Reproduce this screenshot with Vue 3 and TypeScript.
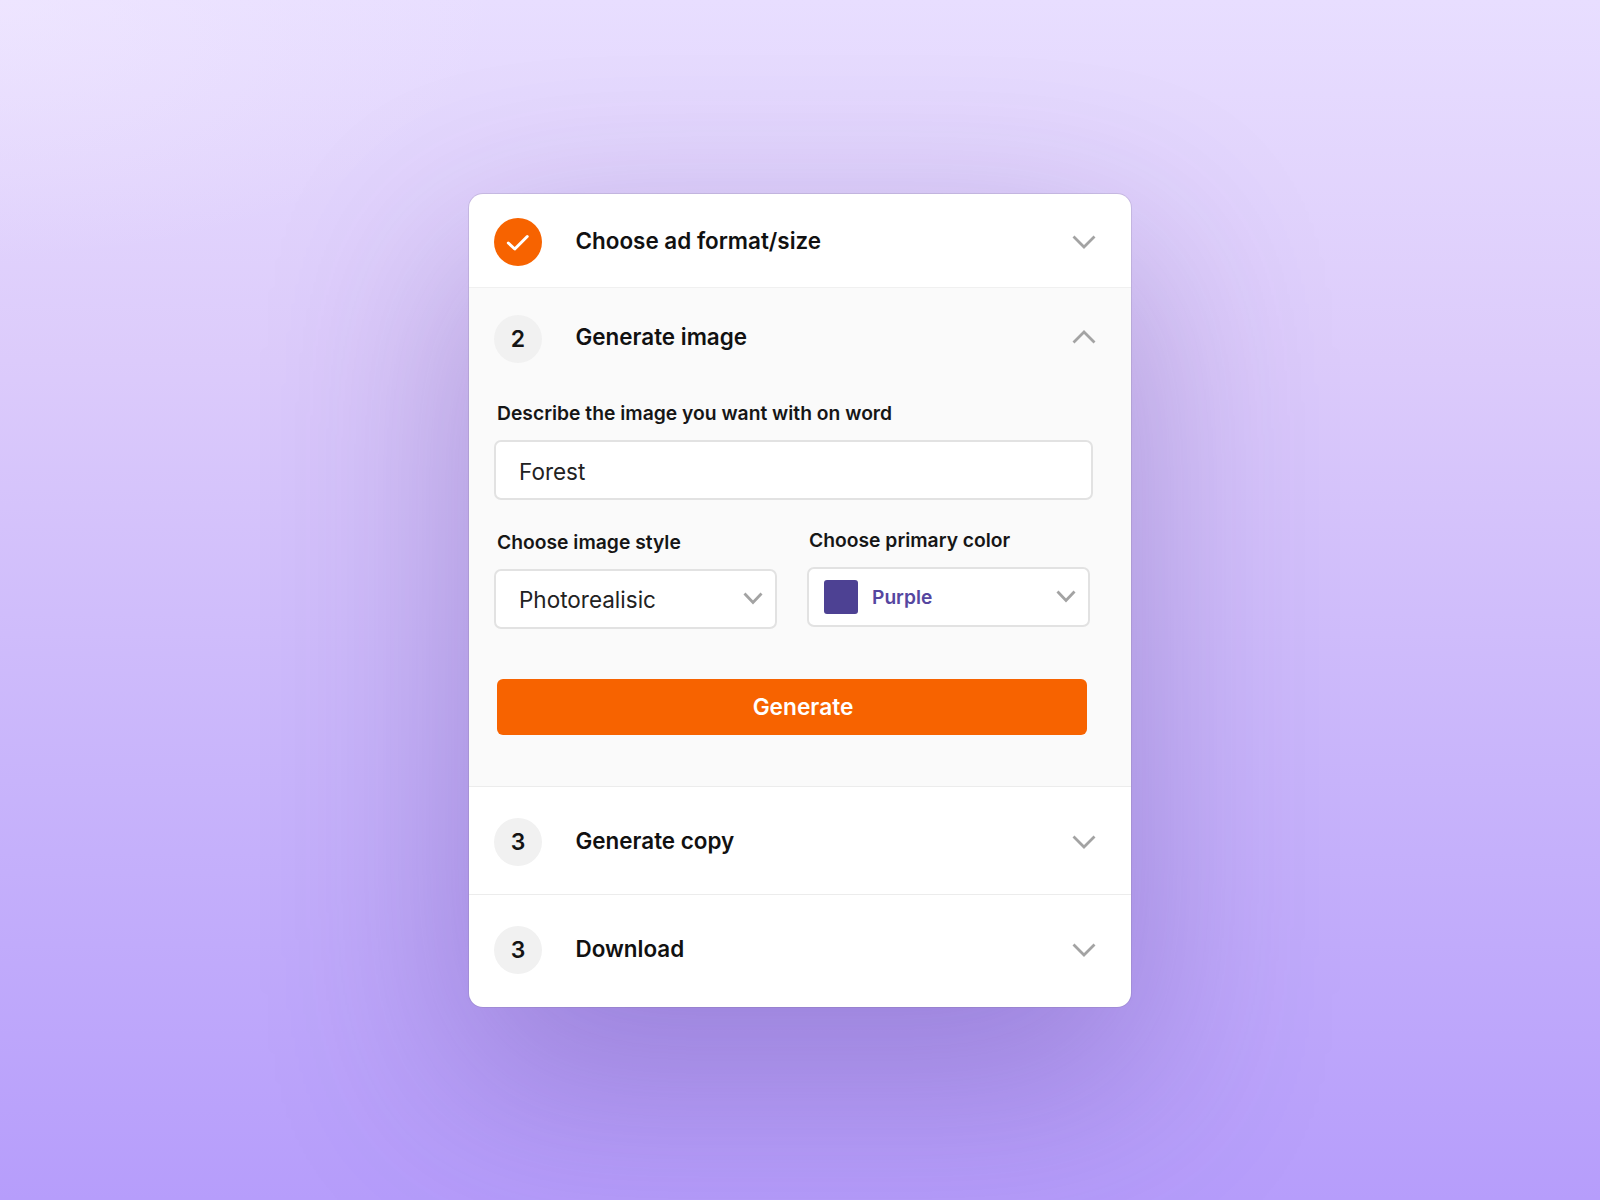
<script setup lang="ts">
interface Step { mark: string; title: string; done?: boolean }
const first: Step = { mark: '', title: 'Choose ad format/size', done: true }
const later: Step[] = [
  { mark: '3', title: 'Generate copy' },
  { mark: '3', title: 'Download' },
]
</script>

<template>
  <div class="page">
    <main class="card">
      <header class="row row-first">
        <span class="badge badge-done">
          <svg width="24" height="19" viewBox="0 0 26 20" fill="none">
            <path d="M2.5 10.5 L9.5 17 L23 3.5" stroke="#fff" stroke-width="3.2" stroke-linecap="round" stroke-linejoin="round" />
          </svg>
        </span>
        <h2 class="title">{{ first.title }}</h2>
        <svg class="chev" width="24" height="14" viewBox="0 0 24 14" fill="none">
          <path d="M1.5 1.5 L12 12 L22.5 1.5" stroke="#a3a3a3" stroke-width="2.8" />
        </svg>
      </header>

      <section class="open">
        <div class="row row-open">
          <span class="badge">2</span>
          <h2 class="title title-open">Generate image</h2>
          <svg class="chev chev-open" width="24" height="14" viewBox="0 0 24 14" fill="none">
            <path d="M1.5 12.5 L12 2 L22.5 12.5" stroke="#a3a3a3" stroke-width="2.8" />
          </svg>
        </div>

        <label class="label label-top">Describe the image you want with on word</label>
        <div class="field field-wide">Forest</div>

        <div class="cols">
          <div class="col col-left">
            <label class="label">Choose image style</label>
            <div class="field field-select">
              <span class="value">Photorealisic</span>
              <svg width="20" height="13" viewBox="0 0 20 13" fill="none">
                <path d="M1.5 1.5 L10 10.5 L18.5 1.5" stroke="#a3a3a3" stroke-width="2.8" />
              </svg>
            </div>
          </div>
          <div class="col col-right">
            <label class="label">Choose primary color</label>
            <div class="field field-select field-color">
              <span class="swatch"></span>
              <span class="color-name">Purple</span>
              <svg width="20" height="13" viewBox="0 0 20 13" fill="none">
                <path d="M1.5 1.5 L10 10.5 L18.5 1.5" stroke="#a3a3a3" stroke-width="2.8" />
              </svg>
            </div>
          </div>
        </div>

        <button class="generate" type="button">Generate</button>
      </section>

      <div v-for="(s, i) in later" :key="s.title" class="row row-later" :class="{ 'row-last': i === later.length - 1 }">
        <span class="badge">{{ s.mark }}</span>
        <h2 class="title">{{ s.title }}</h2>
        <svg class="chev" width="24" height="14" viewBox="0 0 24 14" fill="none">
          <path d="M1.5 1.5 L12 12 L22.5 1.5" stroke="#a3a3a3" stroke-width="2.8" />
        </svg>
      </div>
    </main>
  </div>
</template>

<style>
html, body { margin: 0; }
</style>

<style scoped>
.page {
  width: 100%;
  height: 1200px;
  display: flex;
  align-items: center;
  justify-content: center;
  overflow: hidden;
  font-family: Inter, "Liberation Sans", sans-serif;
  color: #141414;
  background:
    radial-gradient(500px 260px at 0% 0%, rgba(245, 238, 255, 0.45), rgba(245, 238, 255, 0)),
    linear-gradient(180deg, #e8deff 0%, #dccbfb 30%, #c8b4fb 65%, #b69dfb 100%);
}
.card {
  width: 662px;
  height: 813px;
  box-sizing: border-box;
  flex: none;
  display: flex;
  flex-direction: column;
  background: #fff;
  border-radius: 14px;
  overflow: hidden;
  box-shadow: 0 0 0 1px rgba(120, 110, 140, 0.2), 0 70px 190px 10px rgba(70, 40, 140, 0.3);
}
.row {
  display: flex;
  align-items: center;
  padding: 0 35px 0 25px;
  flex: none;
  box-sizing: border-box;
}
.row-first { height: 94px; padding-top: 4px; border-bottom: 1px solid #f0f0f0; }
.row-open { height: 102px; }
.row-later { height: 108px; padding-top: 4px; border-top: 1px solid #ececec; }
.row-last { height: 113px; padding-top: 1px; padding-bottom: 2px; }
.badge {
  width: 48px;
  height: 48px;
  border-radius: 50%;
  background: #f1f1f1;
  display: flex;
  align-items: center;
  justify-content: center;
  font-size: 23px;
  font-weight: 600;
  flex: none;
}
.badge-done { background: #f76300; }
.title {
  margin: 0 0 2px 33.5px;
  font-size: 22.45px;
  font-weight: 600;
  line-height: 28px;
  color: #111;
  flex: 1;
}
.title-open { margin-bottom: 4px; }
.chev { flex: none; }
.chev-open { margin-bottom: 4px; }
.open {
  flex: none;
  height: 498px;
  background: #fafafa;
  box-sizing: border-box;
  display: flex;
  flex-direction: column;
}
.label {
  display: block;
  font-size: 19.3px;
  font-weight: 600;
  line-height: 24px;
  color: #161616;
  margin-left: 3px;
}
.label-top { margin: 11px 0 0 28px; }
.field {
  box-sizing: border-box;
  background: #fff;
  border: 2px solid #e2e2e2;
  border-radius: 7px;
  height: 60px;
  font-size: 22.5px;
  color: #222;
  display: flex;
  align-items: center;
  padding-left: 23px;
}
.field-wide { width: 599px; margin: 15px 0 0 25px; padding-top: 3px; }
.cols {
  display: grid;
  grid-template-columns: 283px 283px;
  column-gap: 30px;
  margin: 28px 0 0 25px;
}
.col-left { padding-top: 2px; }
.col-left .label { margin-bottom: 15px; }
.col-right .label { margin-bottom: 15px; margin-left: 2px; }
.field-select { justify-content: space-between; padding-right: 12px; }
.value { padding-top: 2px; }
.field-color { padding-left: 15px; justify-content: flex-start; }
.swatch {
  width: 34px;
  height: 34px;
  background: #4d4193;
  border-radius: 3px;
  flex: none;
}
.color-name {
  margin-left: 14px;
  padding-top: 1px;
  font-size: 19.2px;
  font-weight: 600;
  color: #5546a0;
  flex: 1;
}
.generate {
  width: 590px;
  height: 56px;
  margin: 50px 0 0 28px;
  background: #f76300;
  border: 0;
  border-radius: 6px;
  color: #fff;
  font: 600 22.7px Inter, "Liberation Sans", sans-serif;
  padding: 0 0 1px 22px;
}
</style>
